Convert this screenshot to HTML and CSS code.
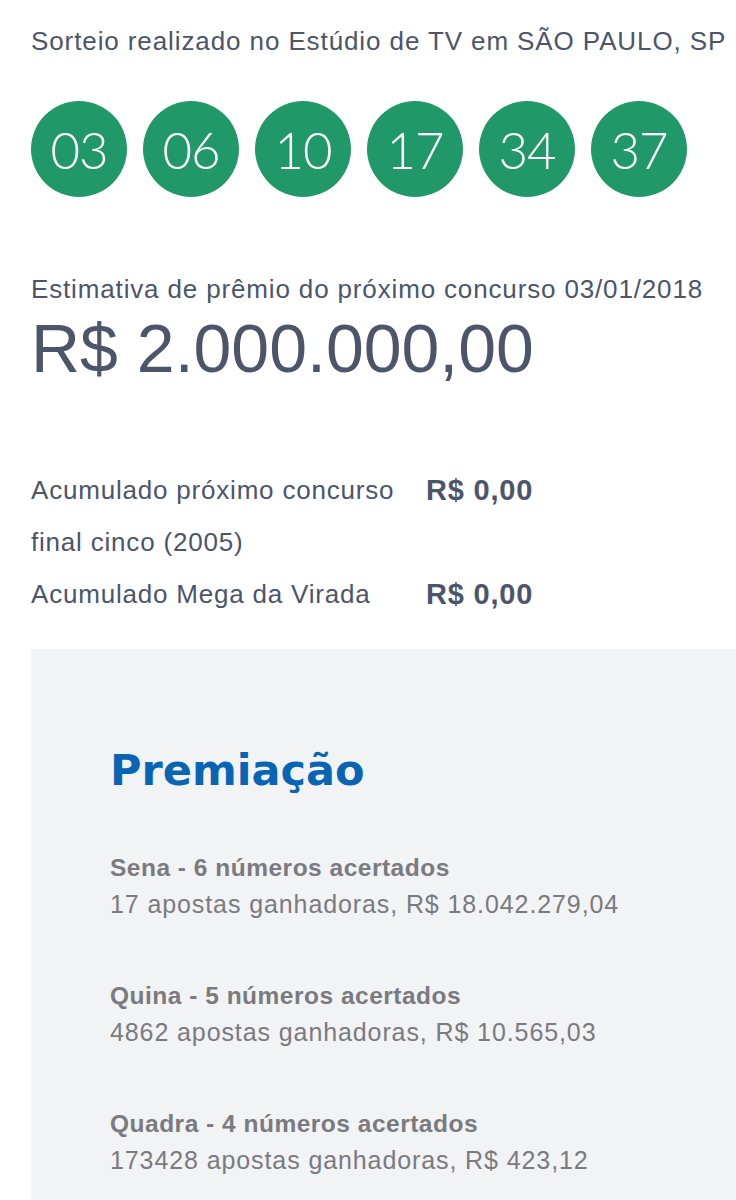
FILE: index.html
```html
<!DOCTYPE html>
<html lang="pt-BR">
<head>
  <meta charset="UTF-8" />
  <meta name="viewport" content="width=device-width, initial-scale=1.0"/>
  <title>Mega-Sena - Resultado</title>
  <link rel="stylesheet" href="styles.css">
</head>
<body>

  <div class="result">
    <p class="venue">Sorteio realizado no Estúdio de TV em SÃO PAULO, SP</p>

    <ul class="balls">
      <li>03</li>
      <li>06</li>
      <li>10</li>
      <li>17</li>
      <li>34</li>
      <li>37</li>
    </ul>

    <div class="estimate">
      <p class="estimate-label">Estimativa de prêmio do próximo concurso 03/01/2018</p>
      <p class="estimate-value">R$ 2.000.000,00</p>
    </div>

    <div class="accum">
      <span class="accum-label">Acumulado próximo concurso final cinco (2005)</span>
      <span class="accum-value">R$ 0,00</span>
      <span class="accum-label">Acumulado Mega da Virada</span>
      <span class="accum-value">R$ 0,00</span>
    </div>

    <section class="prizes">
      <h2>Premiação</h2>

      <div class="prize">
        <h3>Sena - 6 números acertados</h3>
        <p>17 apostas ganhadoras, R$ 18.042.279,04</p>
      </div>

      <div class="prize">
        <h3>Quina - 5 números acertados</h3>
        <p>4862 apostas ganhadoras, R$ 10.565,03</p>
      </div>

      <div class="prize">
        <h3>Quadra - 4 números acertados</h3>
        <p>173428 apostas ganhadoras, R$ 423,12</p>
      </div>
    </section>
  </div>

</body>
</html>
```

FILE: styles.css
```css
body {
  margin: 0;
  font-family: "Liberation Sans", Arial, sans-serif;
  background-color: white;
  color: #4c5569;
  overflow-x: hidden;
}

p, h2, h3, ul {
  margin: 0;
  padding: 0;
}

.result {
  padding: 25px 0 0 31px;
}

.venue {
  font-size: 26px;
  line-height: 32px;
  letter-spacing: 0.9px;
}

.balls {
  list-style: none;
  display: flex;
  gap: 16px;
  margin-top: 44px;
}

.balls li {
  width: 96px;
  height: 96px;
  border-radius: 50%;
  background-color: #209869;
  color: white;
  display: flex;
  justify-content: center;
  align-items: center;
  font-family: Lato, "DejaVu Sans", sans-serif;
  font-weight: 300;
  font-size: 51px;
  letter-spacing: -1px;
}

.estimate {
  margin-top: 76px;
}

.estimate-label {
  font-size: 26px;
  line-height: 32px;
  letter-spacing: 0.85px;
}

.estimate-value {
  margin-top: 9px;
  font-size: 68px;
  line-height: 68px;
}

.accum {
  display: grid;
  grid-template-columns: 395px auto;
  margin-top: 82px;
  font-size: 26px;
  line-height: 52px;
}

.accum-label {
  padding-right: 15px;
  letter-spacing: 0.8px;
}

.accum-value {
  font-size: 29px;
  font-weight: bold;
  letter-spacing: 0.8px;
}

.prizes {
  margin-top: 29px;
  background-color: #f2f3f5;
  padding: 95px 0 60px 79px;
}

.prizes h2 {
  font-family: "DejaVu Sans", sans-serif;
  font-weight: bold;
  font-size: 43px;
  line-height: 52px;
  letter-spacing: 0;
  color: #0a64b4;
}

.prize {
  margin-top: 54px;
  color: #7a7a7f;
}

.prize + .prize {
  margin-top: 56px;
}

.prize h3 {
  font-size: 24.5px;
  line-height: 36px;
  letter-spacing: 0.5px;
}

.prize p {
  font-size: 25px;
  line-height: 36px;
  letter-spacing: 0.9px;
}
```
